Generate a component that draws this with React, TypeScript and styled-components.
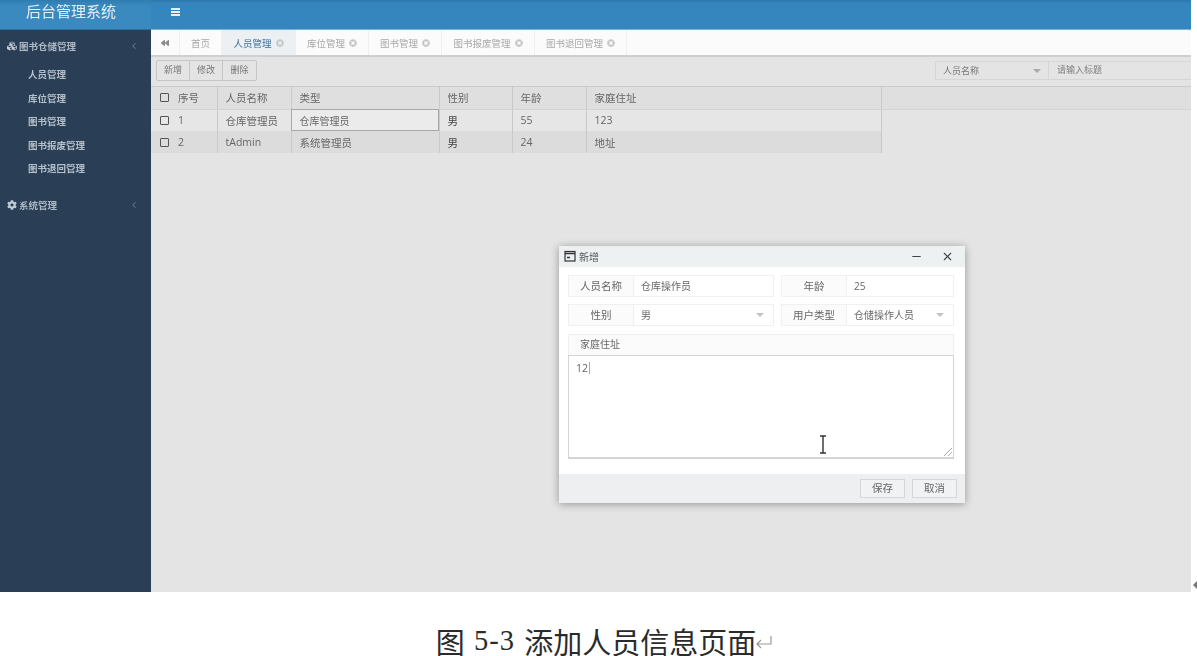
import styled, { createGlobalStyle } from "styled-components";
import { FaBackward, FaCog, FaCubes, FaTimesCircle } from "react-icons/fa";
import { FiChevronLeft, FiMinus, FiX } from "react-icons/fi";

const GlobalStyle = createGlobalStyle`
  html, body {
    margin: 0;
    padding: 0;
    background: #fff;
    overflow: hidden;
  }
  body {
    font-family: "Open Sans", "Noto Sans CJK SC", sans-serif;
  }
  * {
    box-sizing: border-box;
  }
`;

const Page = styled.div`
  position: relative;
  width: 1197px;
  height: 656px;
`;

const Screen = styled.div`
  position: relative;
  display: flex;
  width: 1191px;
  height: 592px;
  overflow: hidden;
  background: #e4e4e4;
  filter: blur(0.55px);
`;

const Sidebar = styled.aside`
  flex: 0 0 151px;
  display: flex;
  flex-direction: column;
  background: #2a3f55;
  color: #b9c4cf;
`;

const Logo = styled.div`
  height: 30px;
  padding: 1px 9px 0 0;
  text-align: center;
  font-size: 15px;
  line-height: 20px;
  color: #e4eef6;
  background: linear-gradient(#2f7cb0, #3a8abf 20%, #3a8abf);
  border-bottom: 1px solid #2f6f9e;
`;

const Menu = styled.nav`
  display: flex;
  flex-direction: column;
  padding-top: 4px;
`;

const MenuGroup = styled.div<{ $gap?: number; $top?: number }>`
  display: flex;
  align-items: center;
  gap: 2px;
  height: 24px;
  padding: 0 12px 0 7px;
  margin-top: ${(p) => p.$top ?? 0}px;
  margin-bottom: ${(p) => p.$gap ?? 0}px;
  font-size: 9.5px;
  font-weight: 700;
  color: #aeb9c5;

  svg:first-child {
    font-size: 10px;
    color: #c2ccd6;
  }
  svg:last-child {
    margin-left: auto;
    font-size: 10px;
    color: #7f8e9e;
  }
`;

const MenuItem = styled.div`
  height: 23.5px;
  padding-left: 28px;
  font-size: 9.5px;
  font-weight: 700;
  line-height: 23.5px;
  color: #b4bfca;
`;

const Main = styled.main`
  flex: 1;
  display: flex;
  flex-direction: column;
  min-width: 0;
`;

const Header = styled.header`
  display: flex;
  align-items: center;
  height: 30px;
  padding: 0 0 5px 20px;
  background: linear-gradient(#2e78ab, #3585be 12%, #3585be);
  border-bottom: 1px solid #7fb0d3;
  color: #e6eff6;
`;

const Burger = styled.span`
  display: block;
  width: 9px;
  height: 8px;
  border-top: 2px solid #e6eff6;
  border-bottom: 2px solid #e6eff6;
  background: linear-gradient(transparent 1px, #e6eff6 1px, #e6eff6 3px, transparent 3px);
`;

const Tabs = styled.div`
  display: flex;
  height: 27px;
  background: #fbfbfb;
  border-bottom: 2px solid #cfcfcf;
`;

const BackTab = styled.div`
  display: flex;
  align-items: center;
  justify-content: center;
  width: 29px;
  color: #8c8c8c;
  font-size: 8px;
  border-right: 1px solid #f0f0f0;
`;

const Tab = styled.div<{ $active?: boolean; $w: number }>`
  display: flex;
  align-items: center;
  justify-content: center;
  gap: 4px;
  width: ${(p) => p.$w}px;
  font-size: 9.5px;
  color: ${(p) => (p.$active ? "#3c6f9e" : "#a8a8a8")};
  background: ${(p) => (p.$active ? "#edf0f3" : "transparent")};
  border-right: 1px solid #f0f0f0;

  svg {
    font-size: 8px;
    color: #c6c6c6;
  }
`;

const Toolbar = styled.div`
  display: flex;
  align-items: center;
  justify-content: space-between;
  height: 30px;
  padding: 0 0 2px 5px;
  border-bottom: 1px solid #cbcbcb;
`;

const ButtonGroup = styled.div`
  display: flex;
  border: 1px solid #c6c6c6;
  border-radius: 2px;
`;

const ToolButton = styled.div`
  width: 33px;
  height: 19px;
  font-size: 9px;
  line-height: 18px;
  text-align: center;
  color: #777;
  border-right: 1px solid #c6c6c6;

  &:last-child {
    border-right: 0;
  }
`;

const Search = styled.div`
  display: flex;
  height: 19px;
  width: 256px;
  border: 1px solid #d6d6d6;
  border-right: 0;
  font-size: 9px;
  color: #777;
`;

const SearchSelect = styled.div`
  display: flex;
  align-items: center;
  justify-content: space-between;
  width: 113px;
  padding: 0 7px;
  border-right: 1px solid #d6d6d6;
`;

const SearchInput = styled.div`
  padding: 0 8px;
  line-height: 16px;
  color: #808080;
`;

const Caret = styled.span<{ $c?: string }>`
  width: 0;
  height: 0;
  border-left: 4px solid transparent;
  border-right: 4px solid transparent;
  border-top: 4px solid ${(p) => p.$c ?? "#a9a9a9"};
`;

const Table = styled.table`
  width: 100%;
  table-layout: fixed;
  border-collapse: collapse;
  font-size: 10.5px;
  color: #666;
`;

const Th = styled.th`
  height: 22px;
  padding: 0 8px;
  background: #dfdfdf;
  border-right: 1px solid #c9c9c9;
  border-bottom: 1px solid #d4d4d4;
  font-weight: 400;
  text-align: left;

  &:last-child {
    border-right: 0;
  }
`;

const Tr = styled.tr<{ $alt?: boolean }>`
  background: ${(p) => (p.$alt ? "#dcdcdc" : "#e6e6e6")};
`;

const Td = styled.td<{ $dark?: boolean }>`
  height: 22px;
  padding: 0 8px;
  border-right: 1px solid #c9c9c9;
  color: ${(p) => (p.$dark ? "#444" : "#666")};
`;

const SelectedTd = styled(Td)`
  padding: 0 8px;
  background: #ebebeb;
  font-size: 10px;
  outline: 1.5px solid #a9a9a9;
  outline-offset: -1.5px;
`;

const BlankTd = styled.td`
  background: #e4e4e4;
`;

const IdCell = styled.div`
  display: flex;
  align-items: center;
  gap: 9px;
  padding-left: 1px;
`;

const Check = styled.span`
  display: block;
  width: 9px;
  height: 9px;
  border: 1.3px solid #555;
  border-radius: 1px;
`;

const Modal = styled.section`
  position: absolute;
  left: 559px;
  top: 246px;
  display: flex;
  flex-direction: column;
  width: 406px;
  height: 257px;
  background: #fff;
  box-shadow: 0 1px 8px rgba(0, 0, 0, 0.35);
  font-size: 10.5px;
  color: #666;
`;

const ModalTitle = styled.div`
  display: flex;
  align-items: center;
  gap: 3px;
  height: 21px;
  padding: 0 11px 1px 5px;
  background: #eef1f2;
  font-size: 10px;
  color: #555;
`;

const TitleActions = styled.div`
  display: flex;
  align-items: center;
  gap: 18px;
  margin-left: auto;
  color: #444;
  font-size: 13px;
`;

const ModalBody = styled.div`
  flex: 1;
  display: flex;
  flex-direction: column;
  gap: 7px;
  padding: 8px 11px 0 9px;
`;

const FormRow = styled.div`
  display: grid;
  grid-template-columns: 206px 173px;
  gap: 7px;
`;

const Field = styled.div`
  display: flex;
  height: 22px;
  border: 1px solid #f0f0f0;
`;

const FieldLabel = styled.div`
  flex: 0 0 65px;
  text-align: center;
  line-height: 21px;
  background: #fbfbfb;
  border-right: 1px solid #f0f0f0;
`;

const FieldValue = styled.div`
  flex: 1;
  display: flex;
  align-items: center;
  justify-content: space-between;
  padding: 0 9px 1px 7px;
  font-size: 10px;
`;

const AddressBlock = styled.div`
  display: flex;
  flex-direction: column;
  margin-top: 1px;
`;

const AddressLabel = styled.div`
  height: 21px;
  padding-left: 11px;
  line-height: 19px;
  font-size: 10px;
  background: #fbfbfb;
  border: 1px solid #f0f0f0;
  border-bottom: 0;
`;

const AddressInput = styled.div`
  position: relative;
  height: 104px;
  padding: 5px 7px;
  font-size: 10.5px;
  border: 1px solid #d4d4d4;
  border-bottom-width: 2px;
`;

const TextCaret = styled.span`
  display: inline-block;
  width: 1px;
  height: 12px;
  margin-left: 1px;
  vertical-align: -2px;
  background: #aaa;
`;

const Grip = styled.svg`
  position: absolute;
  right: 0;
  bottom: 0;
`;

const ModalFooter = styled.div`
  display: flex;
  align-items: center;
  justify-content: flex-end;
  gap: 7px;
  height: 29px;
  padding: 0 8px 1px 0;
  background: #eeeff1;
`;

const FooterButton = styled.div`
  width: 45px;
  height: 19px;
  text-align: center;
  line-height: 17px;
  font-size: 10.5px;
  color: #666;
  border: 1px solid #d6d6d6;
  background: #f1f2f3;
`;

const IBeam = styled.svg`
  position: absolute;
  left: 819px;
  top: 435px;
`;

const ScrollArrow = styled.span`
  position: absolute;
  right: 0;
  top: 581px;
  width: 0;
  height: 0;
  border-top: 4px solid transparent;
  border-bottom: 4px solid transparent;
  border-right: 4px solid #777;
`;

const Caption = styled.div`
  display: flex;
  align-items: center;
  justify-content: center;
  height: 64px;
  padding: 33px 0 0 12px;
  font-family: "Noto Sans CJK SC", serif;
  font-size: 29px;
  line-height: 28px;
  color: #2b2b2b;
  white-space: pre;
`;

const CaptionNumber = styled.span`
  font-family: "Liberation Serif", serif;
  font-size: 28.5px;
  letter-spacing: 1px;
  word-spacing: 1px;
`;

const ReturnMark = styled.svg`
  margin: 3px 0 0 -1px;
`;

const menuItems = ["人员管理", "库位管理", "图书管理", "图书报废管理", "图书退回管理"];

const tabs = [
  { label: "人员管理", w: 74, active: true },
  { label: "库位管理", w: 73 },
  { label: "图书管理", w: 73 },
  { label: "图书报废管理", w: 93 },
  { label: "图书退回管理", w: 92 },
];

const colWidths = [66, 74, 148, 73, 74, 295];

const rows = [
  { id: 1, name: "仓库管理员", type: "仓库管理员", sex: "男", age: "55", addr: "123" },
  { id: 2, name: "tAdmin", type: "系统管理员", sex: "男", age: "24", addr: "地址" },
];

export default function App() {
  return (
    <Page>
      <GlobalStyle />
      <Screen>
        <Sidebar>
          <Logo>后台管理系统</Logo>
          <Menu>
            <MenuGroup $gap={5}>
              <FaCubes />
              图书仓储管理
              <FiChevronLeft />
            </MenuGroup>
            {menuItems.map((item) => (
              <MenuItem key={item}>{item}</MenuItem>
            ))}
            <MenuGroup $top={12}>
              <FaCog />
              系统管理
              <FiChevronLeft />
            </MenuGroup>
          </Menu>
        </Sidebar>
        <Main>
          <Header>
            <Burger />
          </Header>
          <Tabs>
            <BackTab>
              <FaBackward />
            </BackTab>
            <Tab $w={42}>首页</Tab>
            {tabs.map((tab) => (
              <Tab key={tab.label} $w={tab.w} $active={tab.active}>
                {tab.label}
                <FaTimesCircle />
              </Tab>
            ))}
          </Tabs>
          <Toolbar>
            <ButtonGroup>
              <ToolButton>新增</ToolButton>
              <ToolButton>修改</ToolButton>
              <ToolButton>删除</ToolButton>
            </ButtonGroup>
            <Search>
              <SearchSelect>
                人员名称
                <Caret />
              </SearchSelect>
              <SearchInput>请输入标题</SearchInput>
            </Search>
          </Toolbar>
          <Table>
            <colgroup>
              {colWidths.map((w, i) => (
                <col key={i} width={w} />
              ))}
              <col />
            </colgroup>
            <thead>
              <tr>
                <Th>
                  <IdCell>
                    <Check />
                    序号
                  </IdCell>
                </Th>
                <Th>人员名称</Th>
                <Th>类型</Th>
                <Th>性别</Th>
                <Th>年龄</Th>
                <Th>家庭住址</Th>
                <Th />
              </tr>
            </thead>
            <tbody>
              {rows.map((row) => (
                <Tr key={row.id} $alt={row.id === 2}>
                  <Td>
                    <IdCell>
                      <Check />
                      {row.id}
                    </IdCell>
                  </Td>
                  <Td>{row.name}</Td>
                  {row.id === 1 ? <SelectedTd>{row.type}</SelectedTd> : <Td>{row.type}</Td>}
                  <Td $dark>{row.sex}</Td>
                  <Td>{row.age}</Td>
                  <Td>{row.addr}</Td>
                  <BlankTd />
                </Tr>
              ))}
            </tbody>
          </Table>
        </Main>
        <Modal>
          <ModalTitle>
            <svg width="12" height="12" viewBox="0 0 12 12">
              <rect x="1" y="1.5" width="10" height="9.5" fill="none" stroke="#333" strokeWidth="1.2" />
              <path d="M1 3.5h10M3 7.5h3" stroke="#333" strokeWidth="1.5" />
            </svg>
            新增
            <TitleActions>
              <FiMinus />
              <FiX />
            </TitleActions>
          </ModalTitle>
          <ModalBody>
            <FormRow>
              <Field>
                <FieldLabel>人员名称</FieldLabel>
                <FieldValue>仓库操作员</FieldValue>
              </Field>
              <Field>
                <FieldLabel>年龄</FieldLabel>
                <FieldValue>25</FieldValue>
              </Field>
            </FormRow>
            <FormRow>
              <Field>
                <FieldLabel>性别</FieldLabel>
                <FieldValue>
                  男
                  <Caret $c="#c4c4c4" />
                </FieldValue>
              </Field>
              <Field>
                <FieldLabel>用户类型</FieldLabel>
                <FieldValue>
                  仓储操作人员
                  <Caret $c="#c4c4c4" />
                </FieldValue>
              </Field>
            </FormRow>
            <AddressBlock>
              <AddressLabel>家庭住址</AddressLabel>
              <AddressInput>
                12
                <TextCaret />
                <Grip width="10" height="10" viewBox="0 0 10 10">
                  <path d="M1 9l8-8M5 9l4-4" stroke="#aaa" strokeWidth="1" />
                </Grip>
              </AddressInput>
            </AddressBlock>
          </ModalBody>
          <ModalFooter>
            <FooterButton>保存</FooterButton>
            <FooterButton>取消</FooterButton>
          </ModalFooter>
        </Modal>
        <IBeam width="8" height="19" viewBox="0 0 8 19">
          <path d="M1 1h6M4 1v17M1 18h6" stroke="#333" strokeWidth="1.4" fill="none" />
        </IBeam>
      </Screen>
      <ScrollArrow />
      <Caption>
        图<CaptionNumber> 5-3 </CaptionNumber>添加人员信息页面
        <ReturnMark width="18" height="16" viewBox="0 0 18 16">
          <path d="M16 2v8H2M6 6l-4 4 4 4" stroke="#999" strokeWidth="1.2" fill="none" />
        </ReturnMark>
      </Caption>
    </Page>
  );
}
